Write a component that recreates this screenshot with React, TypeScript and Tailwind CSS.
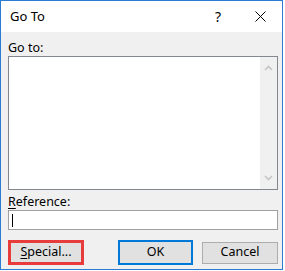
import React from "react";

export default function App() {
  const font = { fontFamily: '"Noto Sans", "Segoe UI", Arial, sans-serif' };
  return (
    <div className="w-[285px] h-[271px] bg-white overflow-hidden" style={font}>
      <div className="w-[283px] h-[270px] border border-[#2b7bd4] flex flex-col">
        {/* Title bar */}
        <div className="h-[31px] bg-white flex items-center shrink-0">
          <span className="ml-[9px] text-[13px] text-black leading-none">Go To</span>
          <span className="ml-auto mr-[34px] text-[14px] leading-none text-black">?</span>
          <svg className="mr-[16px]" width="11" height="11" viewBox="0 0 11 11">
            <path d="M0.5 0.5 L10.5 10.5 M10.5 0.5 L0.5 10.5" stroke="#000" strokeWidth="1" />
          </svg>
        </div>
        {/* Body */}
        <div className="flex-1 bg-[#f0f0f0] pl-[7px] pr-[4px] flex flex-col">
          <div className="mt-[8px] text-[12.5px] leading-[15px] text-black">Go to:</div>
          <div className="mt-[1px] h-[134px] border border-[#828790] bg-white flex">
            <div className="flex-1" />
            <div className="w-[17px] bg-[#f0f0f0] flex flex-col items-center justify-between py-[8px]">
              <svg width="9" height="6" viewBox="0 0 9 6">
                <path d="M1 5 L4.5 1.5 L8 5" stroke="#c5c5c5" strokeWidth="1.6" fill="none" />
              </svg>
              <svg width="9" height="6" viewBox="0 0 9 6">
                <path d="M1 1 L4.5 4.5 L8 1" stroke="#c5c5c5" strokeWidth="1.6" fill="none" />
              </svg>
            </div>
          </div>
          <div className="mt-[4px] text-[12.5px] leading-[15px] text-black">
            <span className="underline underline-offset-2">R</span>eference:
          </div>
          <div className="mt-[1px] h-[20px] border border-[#a0a0a0] bg-white flex items-center pl-[3px]">
            <div className="w-[1px] h-[13px] bg-black" />
          </div>
          <div className="mt-[10px] flex items-center">
            <div className="w-[76px] h-[25px] border-[3px] border-[#e83b3b] bg-[#e1e1e1] flex items-center justify-center text-[12.5px] text-black">
              <span><span className="underline underline-offset-2">S</span>pecial...</span>
            </div>
            <div className="ml-[34px] w-[75px] h-[25px] border-[2px] border-[#0078d7] bg-[#e1e1e1] flex items-center justify-center text-[12.5px] text-black">
              OK
            </div>
            <div className="ml-[9px] w-[76px] h-[22px] border border-[#adadad] bg-[#e1e1e1] flex items-center justify-center text-[12.5px] text-black">
              Cancel
            </div>
          </div>
        </div>
      </div>
    </div>
  );
}
